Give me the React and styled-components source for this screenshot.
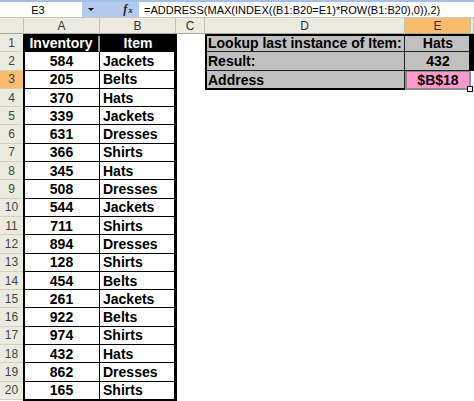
import React from 'react'
import styled, { createGlobalStyle } from 'styled-components'

const rows = [
  [584, 'Jackets'],
  [205, 'Belts'],
  [370, 'Hats'],
  [339, 'Jackets'],
  [631, 'Dresses'],
  [366, 'Shirts'],
  [345, 'Hats'],
  [508, 'Dresses'],
  [544, 'Jackets'],
  [711, 'Shirts'],
  [894, 'Dresses'],
  [128, 'Shirts'],
  [454, 'Belts'],
  [261, 'Jackets'],
  [922, 'Belts'],
  [974, 'Shirts'],
  [432, 'Hats'],
  [862, 'Dresses'],
  [165, 'Shirts'],
]

const columns = [
  { label: '', width: 24 },
  { label: 'A', width: 76 },
  { label: 'B', width: 76 },
  { label: 'C', width: 29 },
  { label: 'D', width: 200 },
  { label: 'E', width: 66, active: true },
  { label: '', width: 3 },
]

const ROW_H = '18.3px'

const GlobalStyle = createGlobalStyle`
  html, body {
    margin: 0;
    padding: 0;
    background: #fff;
  }
  body {
    font-family: "Liberation Sans", Arial, sans-serif;
    overflow: hidden;
  }
`

const Window = styled.div`
  width: 474px;
  height: 401px;
  overflow: hidden;
  background: #fff;
`

const FormulaBar = styled.div`
  display: flex;
  height: 18px;
  box-sizing: border-box;
  border-top: 2px solid #a6bfe8;
  border-bottom: 1px solid #c9c7ba;
  background: #b4cbef;
  font-size: 11px;
  color: #000;
`

const NameBox = styled.div`
  width: 82px;
  display: flex;
  align-items: center;
  justify-content: center;
  background: #fff;
  padding-right: 6px;
  box-sizing: border-box;
`

const Dropdown = styled.div`
  width: 14px;
  display: flex;
  align-items: center;
  justify-content: center;
  margin-left: 2px;
`

const Arrow = styled.span`
  width: 0;
  height: 0;
  border-left: 3px solid transparent;
  border-right: 3px solid transparent;
  border-top: 3px solid #000;
`

const FxButton = styled.div`
  margin-left: auto;
  width: 22px;
  display: flex;
  align-items: center;
  justify-content: center;
  font-family: "Liberation Serif", "Times New Roman", serif;
  font-style: italic;
  font-weight: bold;
  font-size: 12px;
  color: #222;

  small {
    font-size: 9px;
    margin-left: 1px;
  }
`

const Formula = styled.div`
  width: 330px;
  display: flex;
  align-items: center;
  padding-left: 5px;
  background: #fff;
  white-space: nowrap;
  letter-spacing: 0.02px;
`

const Sheet = styled.div`
  display: grid;
  grid-template-columns: ${columns.map((c) => c.width + 'px').join(' ')};
  grid-template-rows: 16px repeat(20, ${ROW_H});
`

const HeadCell = styled.div`
  display: flex;
  align-items: center;
  justify-content: center;
  box-sizing: border-box;
  background: ${(p) => (p.$active ? '#f8bd6c' : '#ecebe0')};
  border-right: 1px solid #c5c3b4;
  border-bottom: 1px solid #aca899;
  font-size: 12px;
  color: #333;
`

const RowHeaders = styled.div`
  grid-column: 1;
  grid-row: 2 / 22;
  display: grid;
  grid-template-rows: repeat(20, ${ROW_H});
`

const RowNum = styled.div`
  display: flex;
  align-items: center;
  justify-content: center;
  box-sizing: border-box;
  background: ${(p) => (p.$active ? '#f8bd6c' : '#ecebe0')};
  border-bottom: 1px solid #d2d0c2;
  border-right: 1px solid #aca899;
  font-size: 12px;
  color: #444;
`

const DataTable = styled.div`
  grid-column: 2 / 4;
  grid-row: 2 / 22;
  display: grid;
  grid-template-columns: 76px 76px;
  grid-template-rows: repeat(20, ${ROW_H});
  position: relative;

  &::after {
    content: '';
    position: absolute;
    inset: 0 -1px -1px -1px;
    border: 2px solid #000;
    border-right-width: 3px;
    pointer-events: none;
  }
`

const Cell = styled.div`
  display: flex;
  align-items: center;
  justify-content: ${(p) => (p.$center ? 'center' : 'flex-start')};
  padding-left: ${(p) => (p.$center ? '0' : '3px')};
  box-sizing: border-box;
  font-size: 14px;
  font-weight: bold;
  color: #000;
  background: #fff;
  border-bottom: 1px solid #000;
  border-right: ${(p) => (p.$divider ? '1px solid #000' : 'none')};
  white-space: nowrap;
`

const HeaderCell = styled(Cell)`
  background: #000;
  color: #fff;
  border-right: ${(p) => (p.$divider ? '2px solid #9a9a9a' : 'none')};
`

const Lookup = styled.div`
  grid-column: 5 / 8;
  grid-row: 2 / 5;
  display: grid;
  grid-template-columns: 200px 66px 3px;
  grid-template-rows: repeat(3, ${ROW_H});
  position: relative;

  &::after {
    content: '';
    position: absolute;
    top: 0;
    left: 0;
    bottom: -1px;
    width: 266px;
    border: 2px solid #000;
    box-sizing: border-box;
    pointer-events: none;
    z-index: 1;
  }
`

const GreyCell = styled(Cell)`
  background: #c0c0c0;
  border-bottom: ${(p) => (p.$last ? 'none' : '1px solid #222')};
  border-right: ${(p) => (p.$divider ? '1px solid #222' : 'none')};
`

const SelectedCell = styled(Cell)`
  position: relative;
  z-index: 2;
  background: #ff99cc;
  border: 2px solid #8c8c8c;
  border-top-width: 1px;
  margin-bottom: -1px;
`

const FillHandle = styled.span`
  position: absolute;
  right: -4px;
  bottom: -4px;
  width: 4px;
  height: 4px;
  background: #fff;
  border: 1px solid #000;
`

const Edge = styled.div`
  background: ${(p) => (p.$dark ? '#000' : '#fff')};
`

export default function App() {
  return (
    <Window>
      <GlobalStyle />
      <FormulaBar>
        <NameBox>E3</NameBox>
        <Dropdown>
          <Arrow />
        </Dropdown>
        <FxButton>
          f<small>x</small>
        </FxButton>
        <Formula>=ADDRESS(MAX(INDEX((B1:B20=E1)*ROW(B1:B20),0)),2)</Formula>
      </FormulaBar>
      <Sheet>
        {columns.map((c, i) => (
          <HeadCell key={i} $active={c.active}>
            {c.label}
          </HeadCell>
        ))}
        <RowHeaders>
          {Array.from({ length: 20 }, (_, i) => (
            <RowNum key={i} $active={i === 2}>
              {i + 1}
            </RowNum>
          ))}
        </RowHeaders>
        <DataTable>
          <HeaderCell $center $divider>
            Inventory
          </HeaderCell>
          <HeaderCell $center>Item</HeaderCell>
          {rows.map(([qty, item], i) => (
            <React.Fragment key={i}>
              <Cell $center $divider>
                {qty}
              </Cell>
              <Cell>{item}</Cell>
            </React.Fragment>
          ))}
        </DataTable>
        <Lookup>
          <GreyCell $divider>Lookup last instance of Item:</GreyCell>
          <GreyCell $center>Hats</GreyCell>
          <Edge $dark />
          <GreyCell $divider>Result:</GreyCell>
          <GreyCell $center>432</GreyCell>
          <Edge $dark />
          <GreyCell $divider $last>
            Address
          </GreyCell>
          <SelectedCell $center>
            $B$18
            <FillHandle />
          </SelectedCell>
          <Edge />
        </Lookup>
      </Sheet>
    </Window>
  )
}
